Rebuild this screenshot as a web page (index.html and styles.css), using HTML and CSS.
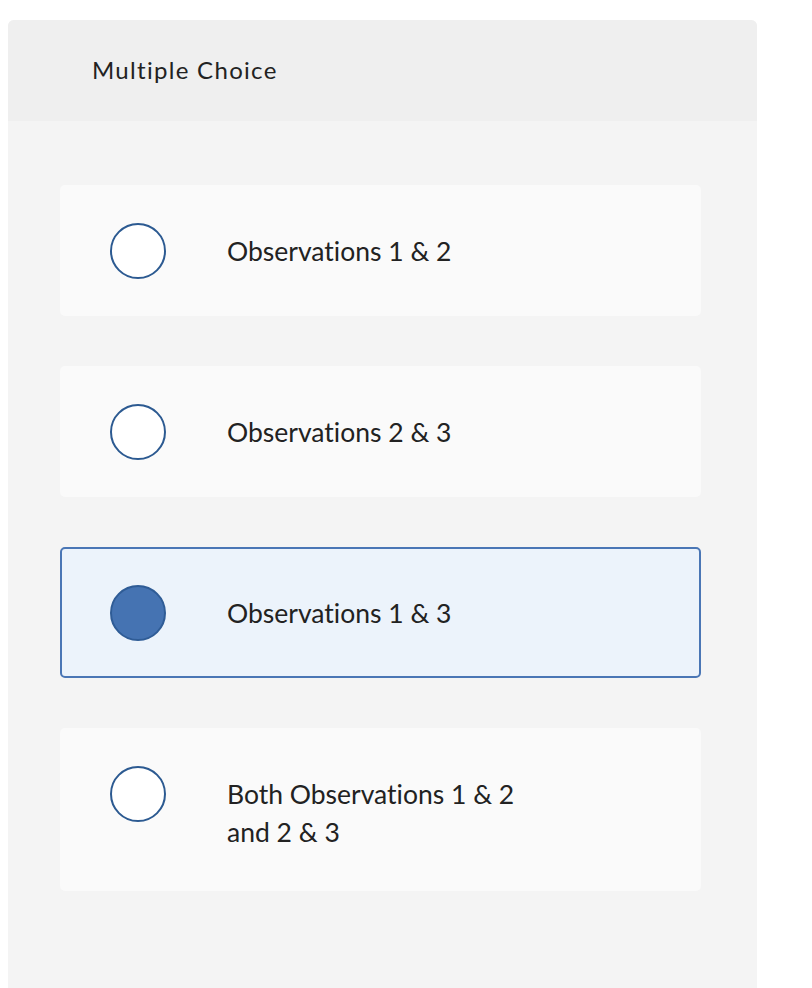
FILE: index.html
```html
<!DOCTYPE html>
<html lang="en">
<head>
<meta charset="utf-8">
<title>Multiple Choice</title>
<link rel="stylesheet" href="styles.css">
</head>
<body>
<div class="panel">
  <div class="panel-header">Multiple Choice</div>
  <div class="panel-body">
    <div class="choice">
      <span class="radio"></span>
      <span class="label">Observations 1 &amp; 2</span>
    </div>
    <div class="choice">
      <span class="radio"></span>
      <span class="label">Observations 2 &amp; 3</span>
    </div>
    <div class="choice selected">
      <span class="radio"></span>
      <span class="label">Observations 1 &amp; 3</span>
    </div>
    <div class="choice">
      <span class="radio"></span>
      <span class="label">Both Observations 1 &amp; 2<br>and 2 &amp; 3</span>
    </div>
  </div>
</div>
</body>
</html>
```
FILE: styles.css
```css
html, body {
  margin: 0;
  padding: 0;
  background: #ffffff;
}
body {
  font-family: "Lato", "Liberation Sans", sans-serif;
  font-variant-ligatures: none;
  color: #222222;
  padding: 20px 0 0 8px;
}
.panel {
  width: 749px;
  min-height: 980px;
  background: #f4f4f4;
  border-radius: 6px 6px 0 0;
  overflow: hidden;
}
.panel-header {
  height: 101px;
  box-sizing: border-box;
  background: #efefef;
  padding: 35px 0 0 84px;
  font-size: 24px;
  letter-spacing: 1.3px;
  line-height: 30px;
  color: #222222;
}
.panel-body {
  padding: 64px 56px 40px 52px;
  display: flex;
  flex-direction: column;
  gap: 50px;
}
.choice {
  display: flex;
  align-items: flex-start;
  background: #fafafa;
  border: 2px solid transparent;
  border-radius: 5px;
  padding: 36px 0 35px 48px;
}
.choice.selected {
  background: #ecf3fb;
  border-color: #4a76b5;
}
.radio {
  flex: none;
  width: 56px;
  height: 56px;
  box-sizing: border-box;
  border: 2px solid #2c5a91;
  border-radius: 50%;
  background: #ffffff;
}
.selected .radio {
  background: #4573b2;
  border-color: #2f5c96;
}
.label {
  margin-left: 61px;
  padding: 9px 0 3px;
  font-size: 26.5px;
  line-height: 38px;
  color: #222222;
}
```
